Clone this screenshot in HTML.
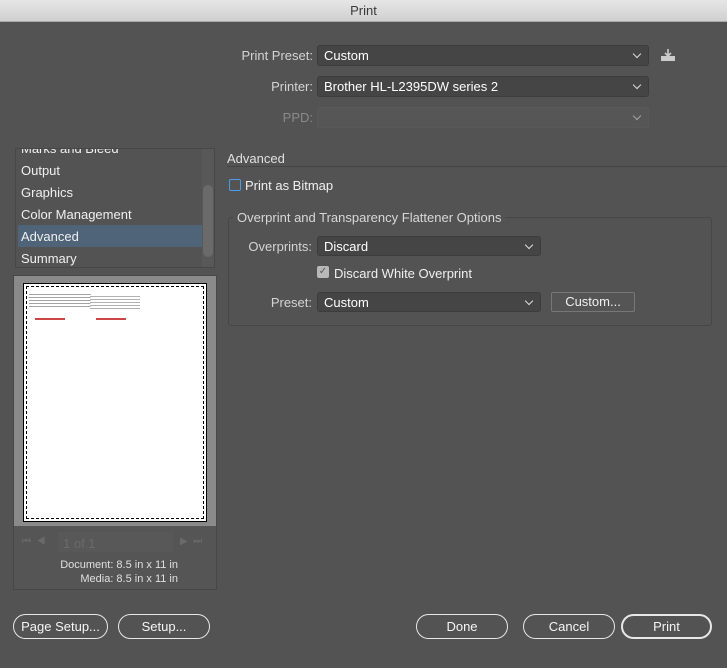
<!DOCTYPE html><html><head><style>
*{box-sizing:border-box;margin:0;padding:0}
body{width:727px;height:668px;background:#535353;font-family:"Liberation Sans",sans-serif;font-size:13px;color:#f0f0f0;position:relative;overflow:hidden}
.a{position:absolute}
.title{left:0;top:0;width:727px;height:22px;background:linear-gradient(#e6e6e6,#d0d0d0);border-bottom:1px solid #a8a8a8;color:#3a3a3a;text-align:center;line-height:22px;font-size:13px}
.lbl{color:#d4d4d4;text-align:right}
.sel{background:#454545;border:1px solid #3c3c3c;border-radius:3px;color:#fff;padding-left:6px;line-height:19px}
.sel:after{content:"";position:absolute;right:8px;top:5px;width:5px;height:5px;border-right:1px solid #ddd;border-bottom:1px solid #ddd;transform:rotate(45deg)}
.btn{border:1.3px solid #e8e8e8;border-radius:13px;text-align:center;line-height:23px;color:#f5f5f5;font-size:13px}
.li{left:21px;color:#f0f0f0}
</style></head><body>
<div class="a title">Print</div>

<div class="a lbl" style="left:200px;top:48px;width:113px">Print Preset:</div>
<div class="a sel" style="left:317px;top:45px;width:332px;height:21px">Custom</div>
<svg class="a" style="left:660px;top:48px" width="16" height="14"><path d="M8 1v7M5 5l3 3 3-3" stroke="#ccc" stroke-width="1.6" fill="none"/><rect x="1" y="8" width="14" height="5" fill="#ccc"/></svg>
<div class="a lbl" style="left:200px;top:79px;width:113px">Printer:</div>
<div class="a sel" style="left:317px;top:76px;width:332px;height:21px">Brother HL-L2395DW series 2</div>
<div class="a lbl" style="left:200px;top:110px;width:113px;color:#8a8a8a">PPD:</div>
<div class="a sel" style="left:317px;top:107px;width:332px;height:21px;background:#595959;border-color:#5e5e5e;opacity:.6"></div>

<div class="a" style="left:15px;top:148px;width:200px;height:120px;border:1px solid #474747;overflow:hidden">
<div class="a li" style="left:5px;top:-8px">Marks and Bleed</div>
<div class="a li" style="left:5px;top:14px">Output</div>
<div class="a li" style="left:5px;top:36px">Graphics</div>
<div class="a li" style="left:5px;top:58px">Color Management</div>
<div class="a" style="left:2px;top:76px;width:184px;height:22px;background:#4f6478"></div>
<div class="a li" style="left:5px;top:80px">Advanced</div>
<div class="a li" style="left:5px;top:102px">Summary</div>
<div class="a" style="left:186px;top:0;width:13px;height:120px;background:#585858"></div>
<div class="a" style="left:187px;top:36px;width:10px;height:72px;background:#6a6a6a;border-radius:5px"></div>
</div>

<div class="a" style="left:13px;top:275px;width:204px;height:315px;border:1px solid #474747;background:#555"></div>
<div class="a" style="left:14px;top:276px;width:202px;height:250px;background:#8a8a8a"></div>
<div class="a" style="left:23px;top:283px;width:184px;height:239px;background:#fff;border:1.5px solid #000"></div>
<div class="a" style="left:26px;top:286px;width:178px;height:233px;border:1px dashed #000"></div>
<div class="a" style="left:29px;top:294px;width:62px;height:14px;background:repeating-linear-gradient(#666 0 1px,#fff 1px 3px);opacity:.6"></div>
<div class="a" style="left:90px;top:296px;width:50px;height:14px;background:repeating-linear-gradient(#666 0 1px,#fff 1px 3px);opacity:.5"></div>
<div class="a" style="left:35px;top:318px;width:30px;height:2px;background:#c44"></div>
<div class="a" style="left:96px;top:318px;width:30px;height:2px;background:#c44"></div>
<div class="a" style="left:58px;top:532px;width:115px;height:20px;background:#585858"></div>
<div class="a" style="left:63px;top:536px;color:#6a6a6a">1 of 1</div>
<div class="a" style="left:22px;top:536px;color:#6a6a6a;font-size:10px">⏮ &nbsp;◀</div>
<div class="a" style="left:180px;top:536px;color:#6a6a6a;font-size:10px">▶ &nbsp;⏭</div>
<div class="a" style="left:15px;top:559px;width:163px;text-align:right;color:#e0e0e0;font-size:11px">Document: 8.5 in x 11 in</div>
<div class="a" style="left:15px;top:573px;width:163px;text-align:right;color:#e0e0e0;font-size:11px">Media: 8.5 in x 11 in</div>

<div class="a" style="left:227px;top:151px;color:#e0e0e0">Advanced</div>
<div class="a" style="left:227px;top:166px;width:500px;height:1px;background:#444"></div>
<div class="a" style="left:229px;top:179px;width:12px;height:12px;border:1.3px solid #4a9be8;border-radius:2px"></div>
<div class="a" style="left:245px;top:178px">Print as Bitmap</div>

<div class="a" style="left:228px;top:217px;width:484px;height:109px;border:1px solid #474747;border-radius:3px"></div>
<div class="a" style="left:233px;top:210px;background:#535353;padding:0 4px;color:#d8d8d8">Overprint and Transparency Flattener Options</div>
<div class="a lbl" style="left:230px;top:239px;width:82px">Overprints:</div>
<div class="a sel" style="left:317px;top:236px;width:224px;height:20px">Discard</div>
<div class="a" style="left:317px;top:266px;width:12px;height:12px;background:#b8b8b8;border-radius:2px;color:#555;font-size:10px;line-height:12px;text-align:center">✓</div>
<div class="a" style="left:334px;top:266px">Discard White Overprint</div>
<div class="a lbl" style="left:230px;top:295px;width:82px">Preset:</div>
<div class="a sel" style="left:317px;top:292px;width:224px;height:20px">Custom</div>
<div class="a" style="left:551px;top:292px;width:84px;height:20px;border:1px solid #777;border-radius:2px;text-align:center;line-height:18px;background:#555">Custom...</div>

<div class="a btn" style="left:13px;top:614px;width:95px;height:25px">Page Setup...</div>
<div class="a btn" style="left:118px;top:614px;width:92px;height:25px">Setup...</div>
<div class="a btn" style="left:416px;top:614px;width:92px;height:25px">Done</div>
<div class="a btn" style="left:523px;top:614px;width:92px;height:25px">Cancel</div>
<div class="a btn" style="left:621px;top:614px;width:91px;height:25px;border-width:2px;line-height:21px">Print</div>
</body></html>
